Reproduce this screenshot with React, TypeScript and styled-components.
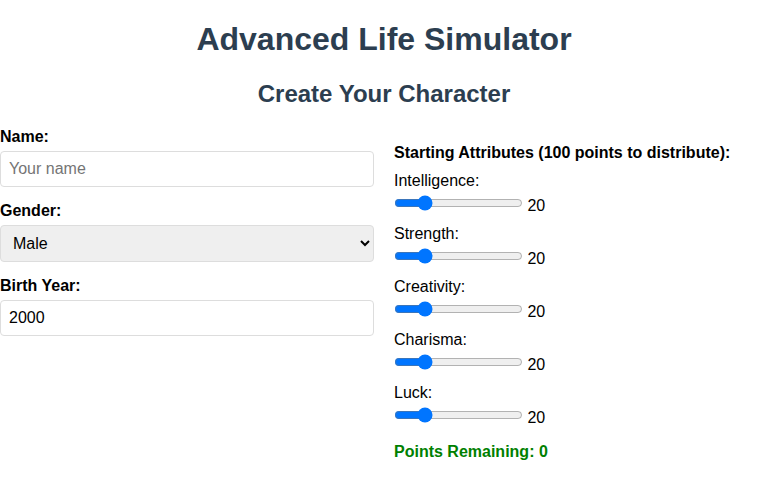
import React, { useState } from "react";
import styled, { createGlobalStyle } from "styled-components";

const GlobalStyle = createGlobalStyle`
  html, body {
    margin: 0;
    padding: 0;
    background: #ffffff;
    font-family: "Liberation Sans", Arial, sans-serif;
    color: #000000;
  }
`;

const Page = styled.div`
  width: 768px;
`;

const Title = styled.h1`
  font-size: 32px;
  font-weight: bold;
  color: #2c3e50;
  text-align: center;
  margin: 21.44px 0;
`;

const Subtitle = styled.h2`
  font-size: 24px;
  font-weight: bold;
  color: #2c3e50;
  text-align: center;
  margin: 19.92px 0;
`;

const Columns = styled.div`
  display: grid;
  grid-template-columns: 1fr 1fr;
  gap: 20px;
`;

const Column = styled.div`
  display: flex;
  flex-direction: column;
`;

const FormGroup = styled.div`
  margin-bottom: 15px;
`;

const Label = styled.label`
  display: block;
  font-weight: bold;
  font-size: 16px;
  margin-bottom: 5px;
`;

const TextInput = styled.input`
  display: block;
  box-sizing: border-box;
  width: 100%;
  padding: 8px;
  font-family: "Liberation Sans", Arial, sans-serif;
  font-size: 16px;
  border: 1px solid #dddddd;
  border-radius: 4px;
  color: #000;
  &::placeholder {
    color: #757575;
  }
`;

const Select = styled.select`
  display: block;
  box-sizing: border-box;
  width: 100%;
  padding: 8px;
  font-family: "Liberation Sans", Arial, sans-serif;
  font-size: 16px;
  border: 1px solid #dddddd;
  border-radius: 4px;
  background-color: #efefef;
  color: #000;
`;

const SectionHeading = styled.p`
  font-weight: bold;
  font-size: 16px;
  margin: 16px 0 10px;
`;

const Attribute = styled.div`
  margin-bottom: 10px;
`;

const AttrLabel = styled.label`
  display: block;
  font-size: 16px;
  margin-bottom: 3px;
`;

const Range = styled.input`
  vertical-align: baseline;
  margin: 2px 0;
  width: 129px;
`;

const Remaining = styled.p<{ $ok: boolean }>`
  font-weight: bold;
  font-size: 16px;
  color: ${(p) => (p.$ok ? "green" : "red")};
  margin: 6px 0 16px;
`;

const ATTRS = ["Intelligence", "Strength", "Creativity", "Charisma", "Luck"];

export default function App() {
  const [values, setValues] = useState<Record<string, number>>(() =>
    Object.fromEntries(ATTRS.map((a) => [a, 20]))
  );
  const used = Object.values(values).reduce((s, v) => s + v, 0);
  const remaining = 100 - used;

  return (
    <>
      <GlobalStyle />
      <Page>
        <Title>Advanced Life Simulator</Title>
        <Subtitle>Create Your Character</Subtitle>
        <Columns>
          <Column>
            <FormGroup>
              <Label htmlFor="name">Name:</Label>
              <TextInput id="name" type="text" placeholder="Your name" />
            </FormGroup>
            <FormGroup>
              <Label htmlFor="gender">Gender:</Label>
              <Select id="gender" defaultValue="Male">
                <option>Male</option>
                <option>Female</option>
                <option>Other</option>
              </Select>
            </FormGroup>
            <FormGroup>
              <Label htmlFor="year">Birth Year:</Label>
              <TextInput id="year" type="number" defaultValue={2000} />
            </FormGroup>
          </Column>
          <Column>
            <SectionHeading>Starting Attributes (100 points to distribute):</SectionHeading>
            {ATTRS.map((a) => (
              <Attribute key={a}>
                <AttrLabel>{a}:</AttrLabel>
                <Range
                  type="range"
                  min={0}
                  max={100}
                  value={values[a]}
                  onChange={(e) =>
                    setValues({ ...values, [a]: Number(e.target.value) })
                  }
                />{" "}
                <span>{values[a]}</span>
              </Attribute>
            ))}
            <Remaining $ok={remaining >= 0}>Points Remaining: {remaining}</Remaining>
          </Column>
        </Columns>
      </Page>
    </>
  );
}
